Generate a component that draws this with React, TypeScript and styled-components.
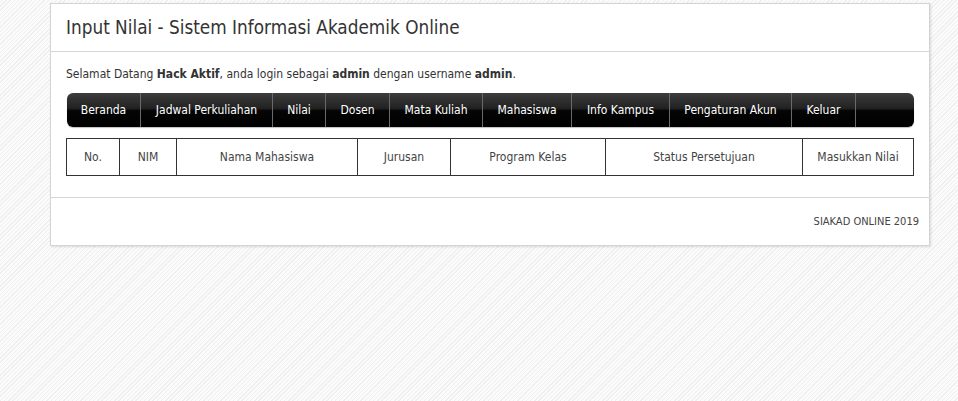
import React from 'react';
import styled, { createGlobalStyle } from 'styled-components';

const GlobalStyle = createGlobalStyle`
  html, body {
    margin: 0;
    padding: 0;
  }
  body {
    min-height: 401px;
    font-family: "DejaVu Sans Condensed", "DejaVu Sans", sans-serif;
    font-size: 12px;
    color: #333;
    background-color: #f7f7f7;
    background-image: repeating-linear-gradient(
      -45deg,
      #fbfbfb 0px,
      #fbfbfb 2px,
      #efefef 2px,
      #efefef 3px
    );
  }
`;

const Page = styled.div`
  padding: 3px 0 0 50px;
`;

const Card = styled.div`
  width: 878px;
  background: #fff;
  border: 1px solid #d4d4d4;
  box-shadow: 1px 1px 2px rgba(0, 0, 0, 0.12);
`;

const Header = styled.header`
  height: 47px;
  display: flex;
  align-items: center;
  padding: 0 15px;
  border-bottom: 1px solid #d6d6d6;
  h1 {
    margin: 0;
    font-size: 18.8px;
    font-weight: normal;
    color: #333;
  }
`;

const Body = styled.div`
  padding: 14px 15px 21px;
`;

const Welcome = styled.p`
  margin: 0 0 11px;
  line-height: 16px;
  color: #333;
  b {
    font-weight: bold;
  }
`;

const Nav = styled.nav`
  display: flex;
  height: 34px;
  margin-left: 1px;
  border-radius: 6px;
  overflow: hidden;
  background: linear-gradient(
    to bottom,
    #3c3c3c 0%,
    #222 45%,
    #050505 52%,
    #000 100%
  );
  box-shadow: 0 1px 1px rgba(0, 0, 0, 0.25);
`;

const NavItem = styled.a<{ $w?: number }>`
  display: flex;
  align-items: center;
  justify-content: center;
  width: ${(p) => (p.$w ? `${p.$w}px` : 'auto')};
  flex: ${(p) => (p.$w ? 'none' : '1')};
  border-right: ${(p) => (p.$w ? '1px solid #6a6a6a' : 'none')};
  color: #fff;
  text-decoration: none;
  font-size: 12px;
  box-sizing: border-box;
`;

const Table = styled.div`
  margin-top: 11px;
  display: grid;
  grid-template-columns: 52px 57px 181px 93px 155px 197px 1fr;
  border: 1px solid #333;
  height: 38px;
  box-sizing: border-box;
`;

const Cell = styled.div`
  display: flex;
  align-items: center;
  justify-content: center;
  color: #444;
  font-size: 12px;
  & + & {
    border-left: 1px solid #333;
  }
`;

const Footer = styled.footer`
  height: 47px;
  border-top: 1px solid #d6d6d6;
  display: flex;
  align-items: center;
  justify-content: flex-end;
  padding: 0 10px;
  font-size: 11px;
  color: #444;
`;

const menu: [string, number][] = [
  ['Beranda', 74],
  ['Jadwal Perkuliahan', 132],
  ['Nilai', 53],
  ['Dosen', 64],
  ['Mata Kuliah', 93],
  ['Mahasiswa', 89],
  ['Info Kampus', 98],
  ['Pengaturan Akun', 122],
  ['Keluar', 64],
];

const columns = [
  'No.',
  'NIM',
  'Nama Mahasiswa',
  'Jurusan',
  'Program Kelas',
  'Status Persetujuan',
  'Masukkan Nilai',
];

export default function App() {
  return (
    <Page>
      <GlobalStyle />
      <Card>
        <Header>
          <h1>Input Nilai - Sistem Informasi Akademik Online</h1>
        </Header>
        <Body>
          <Welcome>
            Selamat Datang <b>Hack Aktif</b>, anda login sebagai <b>admin</b> dengan
            username <b>admin</b>.
          </Welcome>
          <Nav>
            {menu.map(([label, w]) => (
              <NavItem key={label} href="#" $w={w}>
                {label}
              </NavItem>
            ))}
            <NavItem as="span" />
          </Nav>
          <Table>
            {columns.map((c) => (
              <Cell key={c}>{c}</Cell>
            ))}
          </Table>
        </Body>
        <Footer>SIAKAD ONLINE 2019</Footer>
      </Card>
    </Page>
  );
}
